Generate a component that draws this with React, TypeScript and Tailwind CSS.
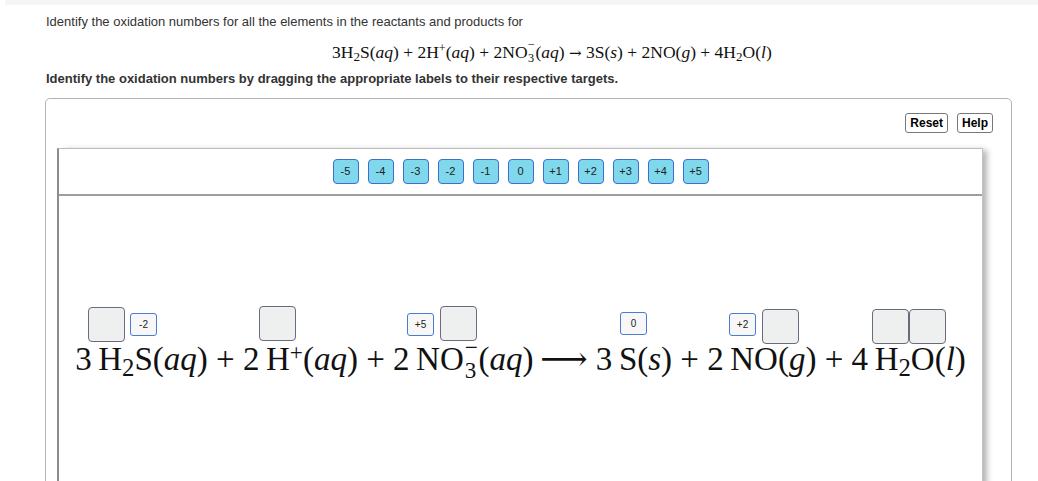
import type { ReactNode } from 'react'

const labels = ['-5', '-4', '-3', '-2', '-1', '0', '+1', '+2', '+3', '+4', '+5']

// drop targets on the equation canvas, relative to the body of the work area
const targets = [
  { x: 29, y: 111 },
  { x: 200, y: 110 },
  { x: 381, y: 110 },
  { x: 703, y: 113 },
  { x: 813, y: 113 },
  { x: 850, y: 113 },
]

const placed = [
  { x: 71, y: 117, text: '-2' },
  { x: 348, y: 117, text: '+5' },
  { x: 561, y: 116, text: '0' },
  { x: 670, y: 117, text: '+2' },
]

function Tile({ children }: { children: ReactNode }) {
  return (
    <div className="flex h-[25px] w-[26px] items-center justify-center rounded-[4px] border-[1.5px] border-[#3f6fce] bg-[#7fd8eb] text-[11px] text-[#222]">
      {children}
    </div>
  )
}

// stacked charge over subscript, e.g. NO3−
function Ion({ sub, sup }: { sub: string; sup: string }) {
  return (
    <span className="relative inline-block h-[1em] w-[0.45em] align-baseline">
      <span className="absolute left-[0.04em] top-[-0.05em] text-[0.7em] leading-none">{sup}</span>
      <span className="absolute left-[0.04em] top-[0.95em] text-[0.7em] leading-none">{sub}</span>
    </span>
  )
}

function Sup({ children }: { children: ReactNode }) {
  return <span className="relative -top-[0.42em] text-[0.7em] leading-none">{children}</span>
}

export default function App() {
  return (
    <div className="min-h-screen overflow-hidden bg-white font-['Liberation_Sans',Arial,sans-serif] text-[#333]">
      <div className="ml-[5px] h-[5px] bg-[#f5f5f5]" />
      <div className="pl-[45px] pr-[26px]">
        <p className="h-[25px] pt-[9px] pl-px text-[13px] leading-[16px]">
          Identify the oxidation numbers for all the elements in the reactants and products for
        </p>
        <div className="mt-[10px] h-[20px] overflow-visible whitespace-nowrap pl-[287px] font-['Liberation_Serif','DejaVu_Serif',serif] text-[17.5px] leading-[20px] text-[#111]">
          3H<sub>2</sub>S(<i>aq</i>) + 2H<Sup>+</Sup>(<i>aq</i>) + 2NO<Ion sub="3" sup="−" />(<i>aq</i>){' '}
          <span className="font-['DejaVu_Serif',serif] text-[15px]">→</span> 3S(<i>s</i>) + 2NO(<i>g</i>) + 4H<sub>2</sub>O(<i>l</i>)
        </div>
        <p className="mt-[11px] h-[16px] pl-px text-[13px] font-bold leading-[16px] text-[#333]">
          Identify the oxidation numbers by dragging the appropriate labels to their respective targets.
        </p>

        <div className="mt-[11px] h-[420px] rounded-[5px] border border-[#b3b3b3]">
          <div className="flex justify-end gap-[9px] pr-[18px] pt-[14px]">
            <button className="h-[20px] rounded-[3px] border border-[#777] bg-white px-[4px] text-[12px] font-bold leading-none text-black">
              Reset
            </button>
            <button className="h-[20px] rounded-[3px] border border-[#777] bg-white px-[4px] text-[12px] font-bold leading-none text-black">
              Help
            </button>
          </div>

          <div className="ml-[11px] mr-[28px] mt-[15px] border-l-2 border-r border-t border-l-[#8c8c8c] border-r-[#c4c4c4] border-t-[#bdbdbd] shadow-[6px_0_6px_-2px_rgba(0,0,0,0.3)]">
            <div className="flex h-[47px] items-center justify-center gap-[9px] border-b-2 border-[#9d9d9d]">
              {labels.map((l) => (
                <Tile key={l}>{l}</Tile>
              ))}
            </div>

            <div className="relative h-[330px] pt-[141px]">
              <div className="h-[33px] whitespace-nowrap text-center font-['Liberation_Serif','DejaVu_Serif',serif] text-[33px] leading-none text-[#111]">
                3&thinsp;H<sub>2</sub>S(<i>aq</i>) + 2&thinsp;H<Sup>+</Sup>(<i>aq</i>) + 2&thinsp;NO
                <Ion sub="3" sup="−" />(<i>aq</i>)&thinsp;<span className="font-['DejaVu_Serif',serif]">⟶</span> 3&thinsp;S(<i>s</i>) + 2&thinsp;NO(<i>g</i>) + 4&thinsp;H<sub>2</sub>O(<i>l</i>)
              </div>

              {targets.map((t, i) => (
                <div
                  key={i}
                  className="absolute h-[35px] w-[37px] rounded-[4px] border-[1.5px] border-[#6a6a7c] bg-[#eef0f0]"
                  style={{ left: t.x, top: t.y }}
                />
              ))}
              {placed.map((p) => (
                <div
                  key={p.text}
                  className="absolute flex h-[23px] w-[27px] items-center justify-center rounded-[3px] border-[1.5px] border-[#4a7bd2] bg-[#f7f7f7] text-[10px] text-[#222]"
                  style={{ left: p.x, top: p.y }}
                >
                  {p.text}
                </div>
              ))}
            </div>
          </div>
        </div>
      </div>
    </div>
  )
}
